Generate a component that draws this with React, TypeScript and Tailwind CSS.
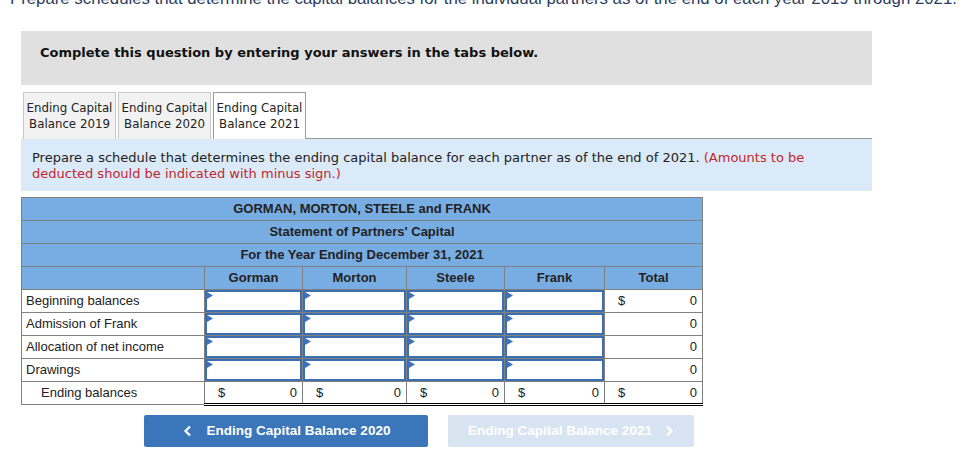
import React from "react";

const arial = { fontFamily: '"Liberation Sans", Arial, sans-serif' };
const verdana = { fontFamily: '"DejaVu Sans", Verdana, sans-serif' };

function Marker() {
  return (
    <svg className="absolute left-0 top-0" width="6" height="7" viewBox="0 0 6 7">
      <polygon points="0,0 6,3.5 0,7" fill="#3b73c0" />
    </svg>
  );
}

function InputCell() {
  return (
    <td className="border border-[#808080] p-0 h-[23px]">
      <div className="relative h-[22px] border-2 border-[#3c6fb2] bg-white">
        <Marker />
      </div>
    </td>
  );
}

function NumCell({ dollar, last }: { dollar?: boolean; last?: boolean }) {
  return (
    <td
      className={
        "border border-[#808080] p-0 h-[23px] bg-white " +
        (last ? "border-b-[3px] border-b-black border-double" : "")
      }
    >
      <div className="flex items-center justify-between pl-[13px] pr-[5px] text-[13px] text-[#222]">
        <span>{dollar ? "$" : ""}</span>
        <span>0</span>
      </div>
    </td>
  );
}

const rows = ["Beginning balances", "Admission of Frank", "Allocation of net income", "Drawings"];

export default function App() {
  return (
    <div className="w-[972px] h-[465px] overflow-hidden bg-white relative">
      <p
        className="-mt-[11px] pl-[10px] text-[16.8px] leading-[20px] text-[#2c3d5e] whitespace-nowrap"
        style={arial}
      >
        Prepare schedules that determine the capital balances for the individual partners as of the end of each year 2019 through 2021.
      </p>
      <div className="ml-[21px] w-[851px]">
        <div
          className="mt-[22px] h-[54px] bg-[#e0e0e0] pl-[19px] pt-[14px] text-[13px] leading-[16px] font-bold text-[#111]"
          style={verdana}
        >
          Complete this question by entering your answers in the tabs below.
        </div>
        <div className="mt-[7px] flex items-end h-[47px]" style={verdana}>
          <div className="w-[2px] h-full" />
          <div className="w-[93px] h-full border border-[#c8c8c8] border-b-0 bg-[#f2f2f2] flex flex-col items-center justify-center text-[11.8px] leading-[16px] text-[#222]">
            <span>Ending Capital</span>
            <span>Balance 2019</span>
          </div>
          <div className="w-[2px] h-full" />
          <div className="w-[93px] h-full border border-[#c8c8c8] border-b-0 bg-[#f2f2f2] flex flex-col items-center justify-center text-[11.8px] leading-[16px] text-[#222]">
            <span>Ending Capital</span>
            <span>Balance 2020</span>
          </div>
          <div className="w-[2px] h-full" />
          <div className="w-[93px] h-full border border-[#999] border-b-0 bg-white flex flex-col items-center justify-center text-[11.8px] leading-[16px] text-[#222]">
            <span>Ending Capital</span>
            <span>Balance 2021</span>
          </div>
          <div className="flex-1 border-b border-[#999]" />
        </div>
        <div
          className="bg-[#dbeaf8] h-[52px] pl-[11px] pr-[40px] pt-[11px] text-[13px] leading-[16px] text-[#222]"
          style={verdana}
        >
          Prepare a schedule that determines the ending capital balance for each partner as of the end of 2021.{" "}
          <span className="text-[#c0272d]">(Amounts to be deducted should be indicated with minus sign.)</span>
        </div>
        <table className="mt-[6px] border-collapse w-[681px] table-fixed" style={arial}>
          <colgroup>
            <col className="w-[183px]" />
            <col className="w-[98px]" />
            <col className="w-[104px]" />
            <col className="w-[98px]" />
            <col className="w-[100px]" />
            <col className="w-[98px]" />
          </colgroup>
          <tbody>
            {["GORMAN, MORTON, STEELE and FRANK", "Statement of Partners' Capital", "For the Year Ending December 31, 2021"].map(
              (t) => (
                <tr key={t} className="h-[23px]">
                  <td
                    colSpan={6}
                    className="border border-[#808080] bg-[#78ade4] text-center text-[13px] font-bold text-[#222] p-0"
                  >
                    {t}
                  </td>
                </tr>
              )
            )}
            <tr className="h-[23px]">
              <td className="border border-[#808080] bg-[#78ade4] p-0" />
              {["Gorman", "Morton", "Steele", "Frank", "Total"].map((n) => (
                <td
                  key={n}
                  className="border border-[#808080] bg-[#78ade4] text-center text-[13px] font-bold text-[#222] p-0"
                >
                  {n}
                </td>
              ))}
            </tr>
            {rows.map((r, i) => (
              <tr key={r} className="h-[23px]">
                <td className="border border-[#808080] bg-white pl-[4px] text-[13px] text-[#222] p-0">{r}</td>
                <InputCell />
                <InputCell />
                <InputCell />
                <InputCell />
                <NumCell dollar={i === 0} />
              </tr>
            ))}
            <tr className="h-[23px]">
              <td className="border border-[#808080] bg-white pl-[19px] text-[13px] text-[#222] p-0">Ending balances</td>
              <NumCell dollar last />
              <NumCell dollar last />
              <NumCell dollar last />
              <NumCell dollar last />
              <NumCell dollar last />
            </tr>
          </tbody>
        </table>
        <div className="mt-[9px] flex gap-[20px] ml-[123px]" style={arial}>
          <div className="w-[284px] h-[32px] rounded-[2px] bg-[#3a76b9] flex items-center justify-center text-white text-[13.5px] font-bold">
            <svg width="10" height="12" viewBox="0 0 10 12" className="mr-[15px]">
              <path d="M8 1.5 L3.5 6 L8 10.5" stroke="white" strokeWidth="2.2" fill="none" />
            </svg>
            <span>Ending Capital Balance 2020</span>
          </div>
          <div className="w-[246px] h-[32px] rounded-[2px] bg-[#d8e4f2] flex items-center justify-center text-white text-[13.5px] font-bold">
            <span>Ending Capital Balance 2021</span>
            <svg width="10" height="12" viewBox="0 0 10 12" className="ml-[12px]">
              <path d="M3 1.5 L7.5 6 L3 10.5" stroke="white" strokeWidth="2.2" fill="none" />
            </svg>
          </div>
        </div>
      </div>
    </div>
  );
}
